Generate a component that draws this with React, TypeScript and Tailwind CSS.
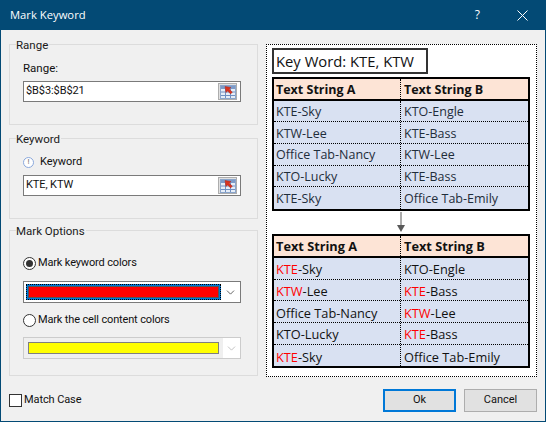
import { ChevronDown } from 'lucide-react';
import type { ReactNode } from 'react';

type Part = { red?: string; rest: string };

const sourceRows: [Part, Part][] = [
    [{ rest: 'KTE-Sky' }, { rest: 'KTO-Engle' }],
    [{ rest: 'KTW-Lee' }, { rest: 'KTE-Bass' }],
    [{ rest: 'Office Tab-Nancy' }, { rest: 'KTW-Lee' }],
    [{ rest: 'KTO-Lucky' }, { rest: 'KTE-Bass' }],
    [{ rest: 'KTE-Sky' }, { rest: 'Office Tab-Emily' }],
];

const markedRows: [Part, Part][] = [
    [{ red: 'KTE', rest: '-Sky' }, { rest: 'KTO-Engle' }],
    [{ red: 'KTW', rest: '-Lee' }, { red: 'KTE', rest: '-Bass' }],
    [{ rest: 'Office Tab-Nancy' }, { red: 'KTW', rest: '-Lee' }],
    [{ rest: 'KTO-Lucky' }, { red: 'KTE', rest: '-Bass' }],
    [{ red: 'KTE', rest: '-Sky' }, { rest: 'Office Tab-Emily' }],
];

function RangeIcon() {
    return (
        <svg width="16" height="14" viewBox="0 0 16 14">
            <rect x="0.5" y="0.5" width="15" height="13" fill="#e6edf7" stroke="#8aa5cb" />
            <rect x="1" y="1" width="14" height="3" fill="#7c9ac8" />
            <path d="M1 7h14M1 10.5h14M5.5 4v9M10.5 4v9" stroke="#6f90c2" />
            <path d="M5 1.5l1 6 1.6-1.6 3 3 1.7-1.7-3-3L11 2.5z" fill="#d8321f" stroke="#b02a1a" strokeWidth="0.5" />
        </svg>
    );
}

function GroupBox({ title, className, children }: { title: string; className: string; children: ReactNode }) {
    return (
        <div className={`relative border border-[#dcdcdc] ${className}`}>
            <span className="absolute -top-[8px] left-[6px] bg-[#f0f0f0] pr-px text-[11.5px] leading-4 text-[#1a1a1a]">{title}</span>
            {children}
        </div>
    );
}

function RangeInput({ value }: { value: string }) {
    return (
        <div className="flex h-[21px] w-[218px] items-center justify-between border border-[#7a7a7a] bg-white pl-[2px] pr-[3px]">
            <span className="text-[11px] tracking-[-0.1px] text-[#111]">{value}</span>
            <span className="flex h-[17px] w-[19px] items-center justify-center border border-[#adadad] bg-[#e1e1e1]">
                <RangeIcon />
            </span>
        </div>
    );
}

function Radio({ checked, label }: { checked?: boolean; label: string }) {
    return (
        <div className="flex items-center gap-[2px]">
            <span className="flex h-[13px] w-[13px] items-center justify-center rounded-full border border-[#333] bg-white">
                {checked && <span className="h-[7px] w-[7px] rounded-full bg-[#333]" />}
            </span>
            <span className="text-[11px] leading-4 tracking-[-0.15px] text-[#111]">{label}</span>
        </div>
    );
}

function Cell({ part, first, className = '' }: { part: Part; first?: boolean; className?: string }) {
    return (
        <div className={`flex items-center ${className} ${first ? 'border-r border-dotted border-black pl-[2px]' : 'pl-[3px]'}`}>
            {part.red && <span className="text-[#ff0000]">{part.red}</span>}
            <span>{part.rest}</span>
        </div>
    );
}

function SampleTable({
    rows,
    className,
    headerNudge,
    rowNudge,
}: {
    rows: [Part, Part][];
    className: string;
    headerNudge: string;
    rowNudge: string;
}) {
    return (
        <div className={`w-[258px] border-2 border-black leading-none ${className}`}>
            <div className="grid h-[21.5px] grid-cols-[127px_1fr] border-b-2 border-black bg-[#fde4d6] font-bold text-[#111]">
                <Cell part={{ rest: 'Text String A' }} first className={headerNudge} />
                <Cell part={{ rest: 'Text String B' }} className={headerNudge} />
            </div>
            {rows.map((row, i) => (
                <div
                    key={i}
                    className={`grid h-[21.7px] grid-cols-[127px_1fr] bg-[#d9e1f2] ${i < rows.length - 1 ? 'border-b border-dotted border-black' : ''}`}
                >
                    <Cell part={row[0]} first className={rowNudge} />
                    <Cell part={row[1]} className={rowNudge} />
                </div>
            ))}
        </div>
    );
}

export default function App() {
    return (
        <div className="flex h-[422px] w-[546px] flex-col overflow-hidden border-x border-b border-[#034a75] bg-[#f0f0f0] font-['Roboto',sans-serif]">
            <div className="-mx-px flex h-[30px] shrink-0 items-center justify-between bg-[#034a75] pl-[10px] pr-[18px] font-['Open_Sans',sans-serif] text-white">
                <span className="text-[11.25px]">Mark Keyword</span>
                <div className="flex items-center gap-[37px]">
                    <span className="text-xs">?</span>
                    <svg width="11" height="11" viewBox="0 0 11 11">
                        <path d="M0.5 0.5l10 10M10.5 0.5l-10 10" stroke="white" />
                    </svg>
                </div>
            </div>

            <div className="flex pl-2 pr-2 pt-[14px]">
                <div className="flex w-[249px] flex-col">
                    <GroupBox title="Range" className="h-[81px] pl-[13px] pt-[15px]">
                        <div className="mb-[5px] text-[11.5px] leading-4 text-[#111]">Range:</div>
                        <RangeInput value="$B$3:$B$21" />
                    </GroupBox>

                    <GroupBox title="Keyword" className="mt-[13px] h-[81px] pl-[13px] pt-[15px]">
                        <div className="mb-[5px] flex items-center gap-[6px] text-[11px] leading-4 text-[#111]">
                            <span className="flex h-[11px] w-[11px] items-center justify-center rounded-full border border-[#8aa8dc] bg-white text-[8px] leading-none text-[#6a6a6a]">
                                !
                            </span>
                            Keyword
                        </div>
                        <RangeInput value="KTE, KTW" />
                    </GroupBox>

                    <GroupBox title="Mark Options" className="mt-[11px] h-[146px] pl-[13px] pt-[24px]">
                        <Radio checked label="Mark keyword colors" />
                        <div className="mt-[10px] flex h-[22px] w-[218px] items-center border border-[#7a7a7a] bg-white">
                            <div className="ml-[2px] h-[16px] w-[195px] border border-dotted border-black bg-[#0078d7] p-px">
                                <div className="h-full border border-[#555] bg-[#ff0000]" />
                            </div>
                            <ChevronDown className="ml-[3px] h-[13px] w-[13px] text-[#444]" strokeWidth={1.5} />
                        </div>
                        <div className="mt-[9px]">
                            <Radio label="Mark the cell content colors" />
                        </div>
                        <div className="mt-[9px] flex h-[22px] w-[218px] items-center border border-[#cccccc] bg-[#efefef]">
                            <div className="ml-[4px] h-[12px] w-[191px] border border-[#7f7f7f] bg-[#ffff00]" />
                            <div className="ml-[4px] flex h-full flex-1 items-center justify-center bg-white">
                                <ChevronDown className="h-[13px] w-[13px] text-[#b5b5b5]" strokeWidth={1.5} />
                            </div>
                        </div>
                    </GroupBox>
                </div>

                <div className="ml-2 flex h-[333px] w-[271px] flex-col border border-dotted border-black bg-white pl-[5px] pt-[3px] font-['Open_Sans',sans-serif]">
                    <div className="flex h-[26px] w-[156px] items-center whitespace-nowrap border-2 border-[#333] pl-[2px] text-[14.8px] leading-none text-[#111]">
                        Key Word: KTE, KTW
                    </div>
                    <div className="mt-[3px]">
                        <SampleTable rows={sourceRows} className="text-[12.5px] text-[#1f2d3a]" headerNudge="pt-[2px]" rowNudge="pt-[3px]" />
                    </div>
                    <div className="flex h-[23.5px] w-[258px] justify-center">
                        <svg width="10" height="23" viewBox="0 0 10 23">
                            <path d="M5 1v15" stroke="#595959" />
                            <path d="M1 14h8l-4 7z" fill="#595959" />
                        </svg>
                    </div>
                    <SampleTable rows={markedRows} className="text-[12.75px] text-[#111]" headerNudge="pt-[1px]" rowNudge="pt-[3px]" />
                </div>
            </div>

            <div className="flex flex-1 items-center justify-between pl-2 pr-2 pt-[3px]">
                <label className="flex items-center gap-[2px]">
                    <span className="h-[13px] w-[13px] border border-[#333] bg-white" />
                    <span className="text-[11px] tracking-[-0.1px] text-[#111]">Match Case</span>
                </label>
                <div className="flex gap-2">
                    <button className="h-[23px] w-[73px] border-2 border-[#0078d7] bg-[#e1e1e1] text-[11px] text-[#111]">Ok</button>
                    <button className="h-[23px] w-[73px] border border-[#adadad] bg-[#e1e1e1] text-[11px] text-[#111]">Cancel</button>
                </div>
            </div>
        </div>
    );
}
